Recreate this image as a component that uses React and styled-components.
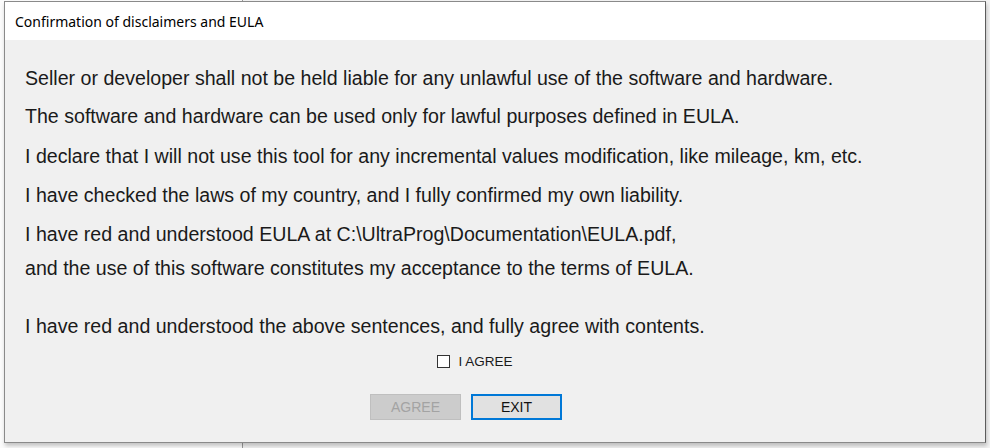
import React, { useState } from 'react'
import styled, { createGlobalStyle } from 'styled-components'

const GlobalStyle = createGlobalStyle`
  html, body {
    margin: 0;
    padding: 0;
    width: 990px;
    height: 448px;
    overflow: hidden;
    background: #f7f7f7;
    font-family: "Liberation Sans", Arial, sans-serif;
  }
`

const Backdrop = styled.div`
  position: relative;
  width: 990px;
  height: 448px;
  display: grid;
  grid-template-columns: 243px 1fr;
`

const Pane = styled.div`
  background: ${p => (p.light ? '#fbfbfb' : '#f3f3f3')};
  border-right: ${p => (p.divider ? '1px solid #9a9a9a' : 'none')};
`

const Dialog = styled.div`
  position: absolute;
  left: 4px;
  top: 1px;
  width: 980px;
  height: 440px;
  display: flex;
  flex-direction: column;
  border: 1px solid #8a8a8a;
  border-right-color: #5c5c5c;
  background: #f0f0f0;
  box-shadow: 1px 3px 4px rgba(0, 0, 0, 0.22);
`

const TitleBar = styled.div`
  height: 38px;
  flex: none;
  background: #ffffff;
  display: flex;
  align-items: center;
  padding-left: 10px;
  font-family: "Noto Sans", "Open Sans", sans-serif;
  font-size: 14px;
  color: #000;
`

const Body = styled.div`
  flex: 1;
  display: flex;
  flex-direction: column;
  padding: 28px 0 0 20px;
`

const Line = styled.div`
  font-size: 19.6px;
  line-height: 21px;
  color: #1a1a1a;
  margin-top: ${p => p.gap || 0}px;
  white-space: nowrap;
`

const CheckRow = styled.label`
  align-self: center;
  display: flex;
  align-items: center;
  gap: 8px;
  margin-top: 17px;
  margin-left: -60px;
  font-size: 13.5px;
  color: #1a1a1a;
  cursor: default;
`

const Box = styled.span`
  width: 11px;
  height: 11px;
  border: 1px solid #333;
  background: #fff;
  display: flex;
  align-items: center;
  justify-content: center;
`

const Buttons = styled.div`
  align-self: center;
  display: flex;
  gap: 10px;
  margin-top: 25px;
  margin-left: -78px;
`

const Button = styled.button`
  width: 91px;
  height: 26px;
  box-sizing: border-box;
  font-family: "Liberation Sans", Arial, sans-serif;
  font-size: 14px;
  padding: 0;
  background: ${p => (p.disabled ? '#cccccc' : '#e1e1e1')};
  color: ${p => (p.disabled ? '#a3a3a3' : '#111')};
  border: ${p => (p.primary ? '2px solid #0078d7' : '1px solid #bfbfbf')};
  outline: none;
`

const lines = [
  ['Seller or developer shall not be held liable for any unlawful use of the software and hardware.', 0],
  ['The software and hardware can be used only for lawful purposes defined in EULA.', 17],
  ['I declare that I will not use this tool for any incremental values modification, like mileage, km, etc.', 19],
  ['I have checked the laws of my country, and I fully confirmed my own liability.', 18],
  ['I have red and understood EULA at C:\\UltraProg\\Documentation\\EULA.pdf,', 18],
  ['and the use of this software constitutes my acceptance to the terms of EULA.', 13],
  ['I have red and understood the above sentences, and fully agree with contents.', 37],
]

export default function App() {
  const [agree, setAgree] = useState(false)
  return (
    <>
      <GlobalStyle />
      <Backdrop>
        <Pane light divider />
        <Pane />
        <Dialog>
          <TitleBar>Confirmation of disclaimers and EULA</TitleBar>
          <Body>
            {lines.map(([text, gap]) => (
              <Line key={text} gap={gap}>{text}</Line>
            ))}
            <CheckRow onClick={() => setAgree(!agree)}>
              <Box>
                {agree && (
                  <svg width="9" height="9" viewBox="0 0 9 9">
                    <path d="M1 4.5l2.3 2.3L8 1.8" stroke="#000" strokeWidth="1.4" fill="none" />
                  </svg>
                )}
              </Box>
              I AGREE
            </CheckRow>
            <Buttons>
              <Button disabled={!agree}>AGREE</Button>
              <Button primary>EXIT</Button>
            </Buttons>
          </Body>
        </Dialog>
      </Backdrop>
    </>
  )
}
